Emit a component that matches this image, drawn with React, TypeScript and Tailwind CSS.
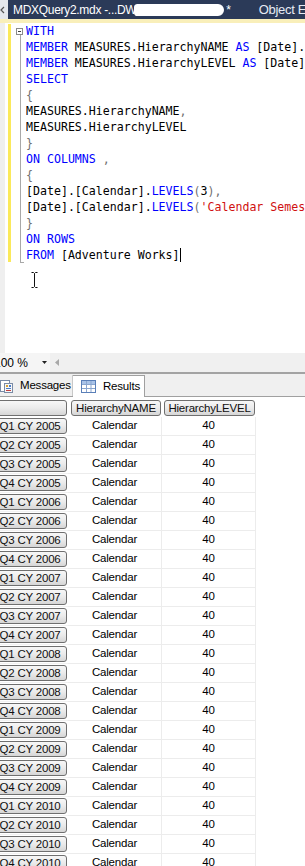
import React from 'react';

const MONO = { fontFamily: '"DejaVu Sans Mono", "Liberation Mono", monospace' };
const UI = { fontFamily: '"Liberation Sans", Arial, sans-serif' };

type Tok = [string, 'k' | 'p' | 's' | 't'];

const CODE: Tok[][] = [
  [['WITH', 'k']],
  [['MEMBER', 'k'], [' MEASURES.HierarchyNAME ', 't'], ['AS', 'k'], [' [Date].', 't']],
  [['MEMBER', 'k'], [' MEASURES.HierarchyLEVEL ', 't'], ['AS', 'k'], [' [Date]', 't']],
  [['SELECT', 'k']],
  [['{', 'p']],
  [['MEASURES.HierarchyNAME', 't'], [',', 'p']],
  [['MEASURES.HierarchyLEVEL', 't']],
  [['}', 'p']],
  [['ON COLUMNS', 'k'], [' ,', 'p']],
  [['{', 'p']],
  [['[Date].[Calendar].', 't'], ['LEVELS', 'k'], ['(', 'p'], ['3', 't'], ['),', 'p']],
  [['[Date].[Calendar].', 't'], ['LEVELS', 'k'], ['(', 'p'], ["'Calendar Semesters'", 's']],
  [['}', 'p']],
  [['ON ROWS', 'k']],
  [['FROM', 'k'], [' [Adventure Works]', 't']],
];

const TOK_CLS = {
  k: 'text-[#0000ff]',
  p: 'text-[#707070]',
  s: 'text-[#d01010]',
  t: 'text-[#000000]',
};

const ROWS: string[] = [];
for (let y = 2005; y <= 2010; y++) for (let q = 1; q <= 4; q++) ROWS.push(`Q${q} CY ${y}`);

function GridIcon() {
  return (
    <svg width="15" height="13" viewBox="0 0 15 13">
      <rect x="0.5" y="0.5" width="14" height="12" fill="#ffffff" stroke="#5a7fb8" />
      <rect x="1" y="1" width="13" height="3" fill="#a9c3e8" />
      <path d="M5.5 1v11M10 1v11M1 4.5h13M1 8.5h13" stroke="#8aa6cf" strokeWidth="1" />
    </svg>
  );
}

function MessagesIcon() {
  return (
    <svg width="14" height="14" viewBox="0 0 14 14">
      <rect x="0.5" y="1.5" width="9" height="11" fill="#ffffff" stroke="#7a8ba6" />
      <rect x="4.5" y="4.5" width="8" height="9" fill="#f7f7f7" stroke="#7a8ba6" />
      <rect x="6" y="6" width="2" height="2" fill="#d8a030" />
      <rect x="9" y="6" width="2" height="2" fill="#4a7cc8" />
      <rect x="6" y="9" width="5" height="1" fill="#4a7cc8" />
      <rect x="6" y="11" width="5" height="1" fill="#c04040" />
    </svg>
  );
}

function HeaderButton({ label, className = '' }: { label: string; className?: string }) {
  return (
    <div
      className={`h-[16px] rounded-[3px] border border-[#6f6f6f] bg-gradient-to-b from-[#f7f7f7] via-[#ebebeb] to-[#d6d6d6] text-[11.5px] tracking-[-0.2px] leading-[14px] text-[#101010] text-center whitespace-nowrap overflow-hidden ${className}`}
    >
      {label}
    </div>
  );
}

export default function App() {
  return (
    <div className="w-[305px] h-[866px] overflow-hidden bg-white flex flex-col" style={UI}>
      {/* document tab bar */}
      <div className="h-[19px] flex shrink-0">
        <div className="w-[8px] shrink-0 bg-[#e4e7ec] flex items-center">
          <svg width="6" height="8" viewBox="0 0 6 8">
            <path d="M4 1L1 4l3 3" stroke="#555" strokeWidth="1.2" fill="none" />
          </svg>
        </div>
        <div className="flex-1 bg-[#2b3a58] flex items-center text-[12px] tracking-[-0.3px] text-white whitespace-nowrap overflow-hidden">
          <span className="ml-[5px] shrink-0">MDXQuery2.mdx -...DW</span>
          <span className="inline-block shrink-0 w-[90px] h-[12px] bg-white rounded-l-[6px] rounded-r-[10px] -ml-[2px]" />
          <span className="ml-[2px] shrink-0">*</span>
          <span className="ml-[28px] shrink-0 text-[13px] text-[#e6ebf4]">Object Explorer</span>
        </div>
      </div>
      <div className="h-[4px] bg-[#f9efba] shrink-0" />

      {/* editor */}
      <div className="h-[330px] flex shrink-0 overflow-hidden">
        <div className="w-[5px] bg-[#efefef]" />
        <div className="w-[3px]" />
        <div className="w-[3px] flex flex-col">
          <div className="h-[1px]" />
          <div className="h-[238px] bg-[#fbe95a]" />
        </div>
        <div className="w-[15px] flex flex-col">
          <div className="mt-[5px] ml-[5px] w-[7px] h-[7px] border border-[#8a8a8a] flex items-center justify-center">
            <div className="w-[3px] h-[1px] bg-[#404040]" />
          </div>
          <div className="ml-[9px] w-[4px] h-[228px] border-l border-b border-[#a8a8a8]" />
        </div>
        <div className="flex-1 flex flex-col overflow-hidden">
          <div className="text-[11.6px]" style={MONO}>
            {CODE.map((line, i) => (
              <div key={i} className="h-[16px] leading-[16px] whitespace-pre flex items-center">
                {line.map(([t, k], j) => (
                  <span key={j} className={TOK_CLS[k]}>
                    {t}
                  </span>
                ))}
                {i === CODE.length - 1 && <span className="inline-block w-[1px] h-[14px] bg-black" />}
              </div>
            ))}
          </div>
          <div className="mt-[9px] ml-[5px]">
            <svg width="7" height="16" viewBox="0 0 7 16">
              <path d="M0.5 0.5h2l1 1 1-1h2M3.5 1.5v13M0.5 15.5h2l1-1 1 1h2" stroke="#111" strokeWidth="1" fill="none" />
            </svg>
          </div>
        </div>
      </div>

      {/* zoom bar */}
      <div className="h-[19px] bg-[#f0f0f0] flex items-center shrink-0">
        <div className="w-[50px] h-full bg-[#f5f5f5] flex items-center">
          <span className="text-[12px] text-black -ml-[6px]">100 %</span>
          <svg className="ml-[14px]" width="5" height="3" viewBox="0 0 5 3">
            <path d="M0 0h5L2.5 3z" fill="#222" />
          </svg>
        </div>
        <svg className="ml-[5px]" width="4" height="7" viewBox="0 0 4 7">
          <path d="M4 0v7L0 3.5z" fill="#a8a8a8" />
        </svg>
      </div>
      <div className="h-[2px] bg-[#a3a3a3] shrink-0" />

      {/* result tabs */}
      <div className="h-[23px] bg-[#f0f0f0] flex items-end border-b border-[#a0a0a0] shrink-0 text-[11.5px] tracking-[-0.2px]">
        <div className="w-[73px] h-[21px] flex items-center border-r border-[#c8c8c8] text-black">
          <MessagesIcon />
          <span className="ml-[6px]">Messages</span>
        </div>
        <div className="w-[72px] h-[22px] -mb-px bg-white border-t border-r border-[#a0a0a0] flex items-center text-black">
          <span className="ml-[8px] flex">
            <GridIcon />
          </span>
          <span className="ml-[7px]">Results</span>
        </div>
      </div>

      {/* results grid */}
      <div className="flex-1 bg-white overflow-hidden pt-[1px] text-[11.5px] tracking-[-0.2px]">
        <div className="h-[19px] flex">
          <div className="w-[68px] pt-[2px] overflow-hidden">
            <HeaderButton label="" className="-ml-[7px] w-[74px]" />
          </div>
          <div className="w-[94px] pt-[2px] pl-[3px]">
            <HeaderButton label="HierarchyNAME" className="w-[90px]" />
          </div>
          <div className="w-[94px] pt-[2px] pl-[2px]">
            <HeaderButton label="HierarchyLEVEL" className="w-[91px]" />
          </div>
        </div>
        {ROWS.map((r) => (
          <div key={r} className="h-[19px] flex">
            <div className="w-[68px] pt-[1px] overflow-hidden border-b border-[#f2f2f2]">
              <HeaderButton label={r} className="-ml-[7px] w-[74px]" />
            </div>
            <div className="w-[94px] border-b border-r border-[#ececec] flex items-center justify-center text-black">
              Calendar
            </div>
            <div className="w-[94px] border-b border-r border-[#ececec] flex items-center justify-center text-black">
              40
            </div>
          </div>
        ))}
      </div>
    </div>
  );
}
